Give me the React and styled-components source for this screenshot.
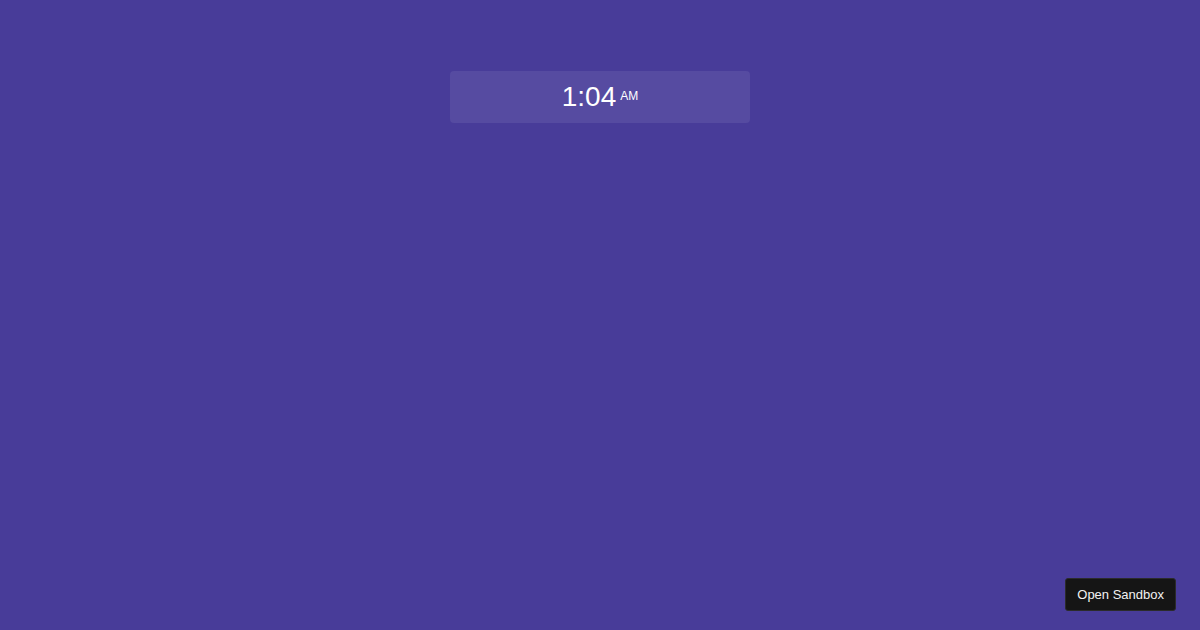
import React from "react";
import styled, { createGlobalStyle } from "styled-components";

const Global = createGlobalStyle`
  html, body { margin: 0; padding: 0; height: 100%; }
  body {
    background: #483c99;
    font-family: "Liberation Sans", Arial, sans-serif;
    color: #fff;
  }
  #root { min-height: 100%; }
`;

const Page = styled.div`
  min-height: 630px;
  display: flex;
  flex-direction: column;
  align-items: center;
  padding-top: 71px;
  box-sizing: border-box;
`;

const Clock = styled.div`
  width: 300px;
  height: 52px;
  border-radius: 4px;
  background: rgba(255, 255, 255, 0.08);
  display: flex;
  align-items: center;
  justify-content: center;
  gap: 4px;
`;

const Time = styled.span`
  font-size: 28px;
  line-height: 1;
  color: #fff;
`;

const Meridiem = styled.span`
  font-size: 12px;
  line-height: 1;
  color: #fff;
  margin-top: -2px;
`;

const SandboxButton = styled.button`
  position: fixed;
  right: 24px;
  bottom: 19px;
  height: 33px;
  padding: 0 11px;
  background: #151515;
  border: 1px solid #2b2b2b;
  border-radius: 3px;
  color: #f2f2f2;
  font-family: "Liberation Sans", Arial, sans-serif;
  font-size: 13px;
  cursor: pointer;
`;

export default function App() {
  return (
    <>
      <Global />
      <Page>
        <Clock>
          <Time>1:04</Time>
          <Meridiem>AM</Meridiem>
        </Clock>
      </Page>
      <SandboxButton>Open Sandbox</SandboxButton>
    </>
  );
}
